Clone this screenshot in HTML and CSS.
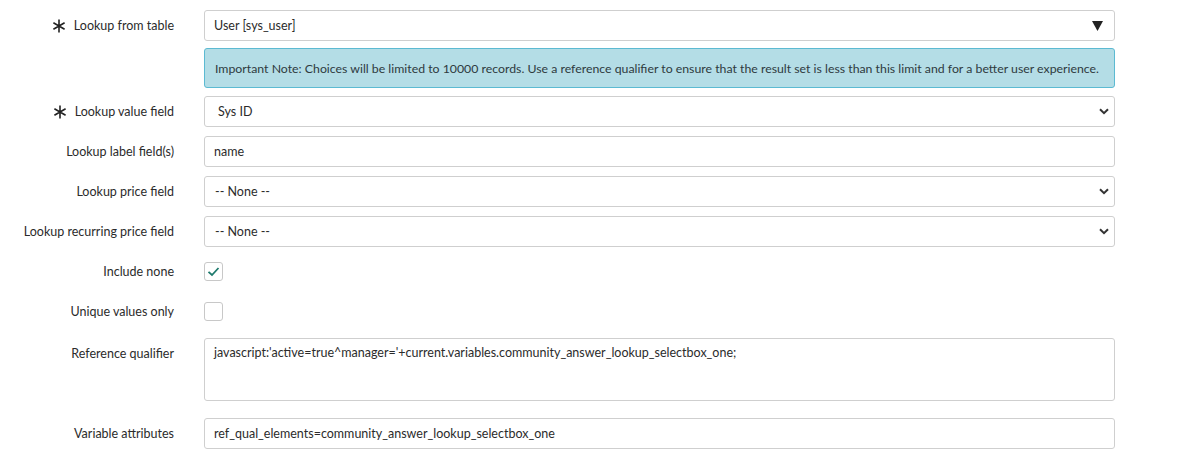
FILE: index.html
```html
<!DOCTYPE html>
<html>
<head>
<meta charset="utf-8">
<link rel="stylesheet" href="styles.css">
</head>
<body>
<div class="form">
  <div class="row">
    <div class="label"><span class="req"><svg viewBox="0 0 14 14" width="14" height="14"><path d="M7 0.5V13.5M1.4 3.8L12.6 10.2M1.4 10.2L12.6 3.8" stroke="#222" stroke-width="1.6" fill="none"/></svg></span>Lookup from table</div>
    <div class="field">
      <div class="box select"><span class="val">User [sys_user]</span><svg class="tri" viewBox="0 0 11 10" width="11" height="10"><path d="M0 0H11L5.5 10Z" fill="#222"/></svg></div>
      <div class="note">Important Note: Choices will be limited to 10000 records. Use a reference qualifier to ensure that the result set is less than this limit and for a better user experience.</div>
    </div>
  </div>
  <div class="row">
    <div class="label"><span class="req"><svg viewBox="0 0 14 14" width="14" height="14"><path d="M7 0.5V13.5M1.4 3.8L12.6 10.2M1.4 10.2L12.6 3.8" stroke="#222" stroke-width="1.6" fill="none"/></svg></span>Lookup value field</div>
    <div class="field"><div class="box select sel2"><span class="val">Sys ID</span><svg class="chev" viewBox="0 0 10 7" width="10" height="7"><path d="M1 1.2L5 5.2L9 1.2" stroke="#333" stroke-width="2" fill="none"/></svg></div></div>
  </div>
  <div class="row">
    <div class="label">Lookup label field(s)</div>
    <div class="field"><div class="box"><span class="val">name</span></div></div>
  </div>
  <div class="row">
    <div class="label">Lookup price field</div>
    <div class="field"><div class="box select sel3"><span class="val">-- None --</span><svg class="chev" viewBox="0 0 10 7" width="10" height="7"><path d="M1 1.2L5 5.2L9 1.2" stroke="#333" stroke-width="2" fill="none"/></svg></div></div>
  </div>
  <div class="row">
    <div class="label">Lookup recurring price field</div>
    <div class="field"><div class="box select sel3"><span class="val">-- None --</span><svg class="chev" viewBox="0 0 10 7" width="10" height="7"><path d="M1 1.2L5 5.2L9 1.2" stroke="#333" stroke-width="2" fill="none"/></svg></div></div>
  </div>
  <div class="row">
    <div class="label">Include none</div>
    <div class="field check-field"><div class="check"><svg viewBox="0 0 19 19" width="19" height="19"><path d="M4.5 9.8L8 13L14.5 6" stroke="#1e7a6d" stroke-width="1.8" fill="none"/></svg></div></div>
  </div>
  <div class="row row-check2">
    <div class="label">Unique values only</div>
    <div class="field check-field"><div class="check"></div></div>
  </div>
  <div class="row row-ta">
    <div class="label">Reference qualifier</div>
    <div class="field"><div class="box textarea"><span class="val">javascript:'active=true^manager='+current.variables.community_answer_lookup_selectbox_one;</span></div></div>
  </div>
  <div class="row">
    <div class="label">Variable attributes</div>
    <div class="field"><div class="box"><span class="val">ref_qual_elements=community_answer_lookup_selectbox_one</span></div></div>
  </div>
</div>
</body>
</html>
```
FILE: styles.css
```css
html, body {
  margin: 0;
  padding: 0;
  background: #fff;
}
body {
  font-family: "Lato", "Liberation Sans", sans-serif;
  font-size: 12.5px;
  color: #2b2b2b;
}
.form {
  padding-top: 10px;
  width: 1115px;
}
.row {
  display: grid;
  grid-template-columns: 174px minmax(0, 1fr);
  column-gap: 30px;
  margin-bottom: 9px;
}
.label {
  text-align: right;
  line-height: 31px;
  white-space: nowrap;
  display: flex;
  justify-content: flex-end;
  align-items: flex-start;
}
.req {
  display: inline-flex;
  align-items: center;
  height: 31px;
  margin-right: 8px;
}
.field {
  display: flex;
  flex-direction: column;
  min-width: 0;
}
.box {
  box-sizing: border-box;
  height: 31px;
  border: 1px solid #cfcfcf;
  border-radius: 3px;
  background: #fff;
  display: flex;
  align-items: center;
  padding: 0 10px 0 9px;
  color: #2b2b2b;
}
.box .val {
  flex: 1;
  white-space: nowrap;
}
.select .tri {
  margin-right: 1px;
}
.sel2 {
  padding-left: 13px;
}
.sel3 {
  padding-left: 10px;
}
.chev {
  margin-right: -5px;
}
.note {
  margin-top: 7px;
  box-sizing: border-box;
  height: 40px;
  background: #b4dde6;
  border: 1px solid #5cbad2;
  border-radius: 3px;
  display: flex;
  align-items: center;
  padding: 0 10px;
  white-space: nowrap;
  color: #2e3a3e;
  font-size: 12.3px;
  margin-bottom: -1px;
}
.check-field {
  height: 31px;
  justify-content: center;
}
.check {
  box-sizing: border-box;
  width: 19px;
  height: 19px;
  border: 1px solid #c8c8c8;
  border-radius: 3px;
  background: #fff;
  display: flex;
}
.check svg {
  margin: -1px;
}
.row-check2 {
  margin-bottom: 11px;
}
.textarea {
  height: 63px;
  align-items: flex-start;
  padding-top: 6px;
}
.row-ta {
  margin-bottom: 17px;
}
```
